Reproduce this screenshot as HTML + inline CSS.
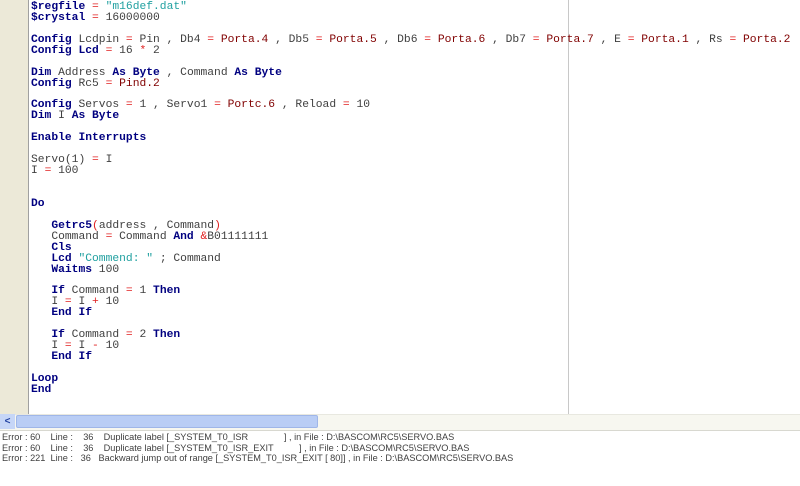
<!DOCTYPE html>
<html><head><meta charset="utf-8"><style>
html,body{margin:0;padding:0;width:800px;height:486px;overflow:hidden;background:#fff;}
#gut{position:absolute;left:0;top:0;width:28px;height:414px;background:#ece9d8;border-right:1px solid #a0a0a0;}
#margin{position:absolute;left:568px;top:0;width:1px;height:414px;background:#c8c8c8;}
#code{position:absolute;left:31px;top:2px;font-family:"Liberation Mono",monospace;font-size:11.3px;line-height:10.94px;color:#404040;white-space:pre;}
b{color:#000080;font-weight:bold;}
.o{color:#e02020;}
.p{color:#800000;}
.s{color:#20a0a0;}
#sb{position:absolute;left:0;top:414px;width:800px;height:15px;background:#f7f7f0;border-top:1px solid #e8e8e0;}
#btn{position:absolute;left:0;top:414px;width:15px;height:15px;background:#c6d6f7;color:#2040a0;font:bold 10px "Liberation Sans",sans-serif;text-align:center;line-height:15px;}
#thumb{position:absolute;left:16px;top:415px;width:302px;height:13px;background:#b9cdf5;border:1px solid #9fb6e8;border-radius:2px;box-sizing:border-box;}
#sep{position:absolute;left:0;top:430px;width:800px;height:1px;background:#d8d8d0;}
#err{position:absolute;left:2px;top:432px;font-family:"Liberation Sans",sans-serif;font-size:9.2px;line-height:10.6px;color:#404040;white-space:pre;}
</style></head><body>
<div id="gut"></div><div id="margin"></div>
<div id="code"><b>$regfile</b> <span class="o">=</span> <span class="s">"m16def.dat"</span>
<b>$crystal</b> <span class="o">=</span> 16000000

<b>Config</b> Lcdpin <span class="o">=</span> Pin , Db4 <span class="o">=</span> <span class="p">Porta.4</span> , Db5 <span class="o">=</span> <span class="p">Porta.5</span> , Db6 <span class="o">=</span> <span class="p">Porta.6</span> , Db7 <span class="o">=</span> <span class="p">Porta.7</span> , E <span class="o">=</span> <span class="p">Porta.1</span> , Rs <span class="o">=</span> <span class="p">Porta.2</span>
<b>Config Lcd</b> <span class="o">=</span> 16 <span class="o">*</span> 2

<b>Dim</b> Address <b>As Byte</b> , Command <b>As Byte</b>
<b>Config</b> Rc5 <span class="o">=</span> <span class="p">Pind.2</span>

<b>Config</b> Servos <span class="o">=</span> 1 , Servo1 <span class="o">=</span> <span class="p">Portc.6</span> , Reload <span class="o">=</span> 10
<b>Dim</b> I <b>As Byte</b>

<b>Enable Interrupts</b>

Servo(1) <span class="o">=</span> I
I <span class="o">=</span> 100


<b>Do</b>

   <b>Getrc5</b><span class="o">(</span>address , Command<span class="o">)</span>
   Command <span class="o">=</span> Command <b>And</b> <span class="o">&amp;</span>B01111111
   <b>Cls</b>
   <b>Lcd</b> <span class="s">"Commend: "</span> ; Command
   <b>Waitms</b> 100

   <b>If</b> Command <span class="o">=</span> 1 <b>Then</b>
   I <span class="o">=</span> I <span class="o">+</span> 10
   <b>End If</b>

   <b>If</b> Command <span class="o">=</span> 2 <b>Then</b>
   I <span class="o">=</span> I <span class="o">-</span> 10
   <b>End If</b>

<b>Loop</b>
<b>End</b></div>
<div id="sb"></div><div id="btn">&lt;</div><div id="thumb"></div><div id="sep"></div>
<div id="err">Error : 60    Line :    36    Duplicate label [_SYSTEM_T0_ISR              ] , in File : D:\BASCOM\RC5\SERVO.BAS
Error : 60    Line :    36    Duplicate label [_SYSTEM_T0_ISR_EXIT          ] , in File : D:\BASCOM\RC5\SERVO.BAS
Error : 221  Line :   36   Backward jump out of range [_SYSTEM_T0_ISR_EXIT [ 80]] , in File : D:\BASCOM\RC5\SERVO.BAS</div>
</body></html>
